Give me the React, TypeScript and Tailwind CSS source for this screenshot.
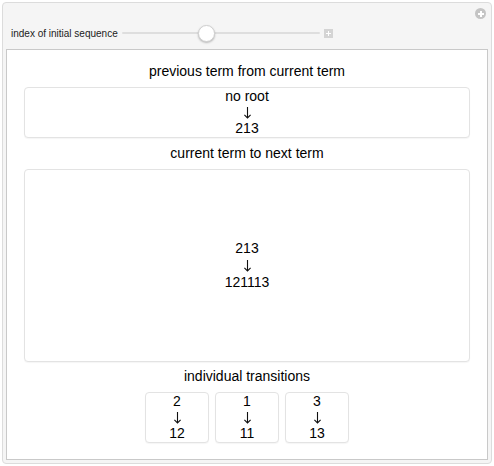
import React from 'react';

function DownArrow() {
  return (
    <svg width="9" height="13" viewBox="0 0 9 13" className="block" aria-label="↓">
      <path d="M4.5 1 V11.8" stroke="#111" strokeWidth="1.1" fill="none" />
      <path d="M1.4 8.8 L4.5 12 L7.6 8.8" stroke="#111" strokeWidth="1.1" fill="none" />
    </svg>
  );
}

function Transition({ from, to, className }: { from: string; to: string; className: string }) {
  return (
    <div className={`flex flex-col items-center justify-center rounded-[4px] border border-[#e3e3e3] bg-white shadow-[0_1px_1px_rgba(0,0,0,0.04)] ${className}`}>
      <div className="leading-[17px]">{from}</div>
      <div className="flex h-[17px] items-center justify-center">
        <DownArrow />
      </div>
      <div className="leading-[17px]">{to}</div>
    </div>
  );
}

export default function App() {
  const pairs = [
    { from: '2', to: '12' },
    { from: '1', to: '11' },
    { from: '3', to: '13' },
  ];

  return (
    <div
      className="h-[466px] w-[494px] bg-white p-[2px] text-black"
      style={{ fontFamily: '"Liberation Sans", Arial, sans-serif' }}
    >
      <div className="relative flex h-[462px] w-[490px] flex-col rounded-[4px] border border-[#dcdcdc] bg-[#f5f5f5] px-[3px] pb-[3px]">
        {/* top-right plus */}
        <div className="absolute right-[5px] top-[5px] flex h-[11px] w-[11px] items-center justify-center rounded-full bg-[#c4c4c4]">
          <div className="relative h-[6px] w-[6px]">
            <div className="absolute left-0 top-[2px] h-[2px] w-[6px] bg-white" />
            <div className="absolute left-[2px] top-0 h-[6px] w-[2px] bg-white" />
          </div>
        </div>

        {/* slider row */}
        <div className="flex h-[46px] items-center pl-[5px] pt-[14px]">
          <span className="text-[10px] text-[#222]">index of initial sequence</span>
          <div className="relative ml-[4px] h-[16px] w-[198px]">
            <div className="absolute left-0 right-0 top-[7px] h-[2px] rounded bg-[#dedede]" />
            <div className="absolute left-[76px] top-0 h-[17px] w-[17px] rounded-full border border-[#d0d0d0] bg-white shadow-[0_1px_2px_rgba(0,0,0,0.25)]" />
          </div>
          <div className="ml-[4px] flex h-[9px] w-[9px] items-center justify-center bg-[#d4d4d4]">
            <div className="relative h-[5px] w-[5px]">
              <div className="absolute left-0 top-[2px] h-[1px] w-[5px] bg-white" />
              <div className="absolute left-[2px] top-0 h-[5px] w-[1px] bg-white" />
            </div>
          </div>
        </div>

        {/* content panel */}
        <div className="flex flex-1 flex-col items-center border border-[#c9c9c9] bg-white px-[17px] pt-[13px] text-[14px]">
          <div className="leading-[17px]">previous term from current term</div>
          <Transition from="no root" to="213" className="mt-[7px] h-[51px] w-full" />
          <div className="mt-[7px] leading-[17px]">current term to next term</div>
          <Transition from="213" to="121113" className="mt-[7px] h-[193px] w-full" />
          <div className="mt-[6px] leading-[17px]">individual transitions</div>
          <div className="mt-[7px] flex gap-[6px]">
            {pairs.map((p, i) => (
              <Transition key={i} from={p.from} to={p.to} className="h-[51px] w-[64px]" />
            ))}
          </div>
        </div>
      </div>
    </div>
  );
}
